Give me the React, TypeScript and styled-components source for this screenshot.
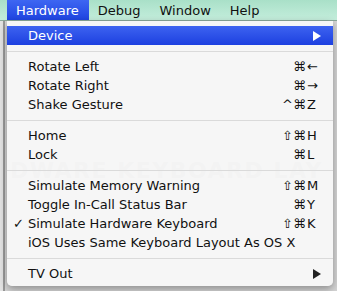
import React, { FC } from 'react';
import styled, { createGlobalStyle } from 'styled-components';

const GlobalStyle = createGlobalStyle`
  html, body {
    margin: 0;
    padding: 0;
    background: #dcdcdc;
  }
  body {
    font-family: "DejaVu Sans", "Liberation Sans", sans-serif;
    -webkit-font-smoothing: antialiased;
  }
`;

const Screen = styled.div`
  position: relative;
  width: 337px;
  height: 291px;
  overflow: hidden;
  background: #dadada;
  display: flex;
  flex-direction: column;
`;

const MenuBar = styled.div`
  height: 21px;
  flex: none;
  display: flex;
  align-items: stretch;
  padding-left: 7px;
  background: linear-gradient(#a9e0c8, #c4eedc);
  border-bottom: 1px solid #8aa89a;
  box-sizing: border-box;
`;

const BarItem = styled.div<{ $active?: boolean }>`
  display: flex;
  align-items: center;
  padding: 0 10px 0 9px;
  font-size: 13px;
  color: ${p => (p.$active ? '#fff' : '#111')};
  background: ${p => (p.$active ? 'linear-gradient(#3d66f2, #1f45e2)' : 'none')};
`;

const Desktop = styled.div`
  flex: 1;
  position: relative;
  background: linear-gradient(90deg, #e4e4e4 0, #e4e4e4 3px, #9a9a9a 3px, #9a9a9a 5px, #d6d6d6 5px);
`;

const GhostText = styled.div`
  position: absolute;
  left: 10px;
  top: 137px;
  font-size: 22px;
  font-weight: bold;
  letter-spacing: 1.5px;
  white-space: nowrap;
  color: #b2b2b2;
`;

const Menu = styled.div`
  position: absolute;
  top: 21px;
  left: 7px;
  width: 326px;
  padding: 5px 0 3px;
  background: rgba(249, 249, 249, 0.9);
  border-radius: 0 0 5px 5px;
  box-shadow: 0 3px 9px rgba(0, 0, 0, 0.35);
  font-size: 13px;
  color: #111;
`;

const Row = styled.div<{ $active?: boolean }>`
  position: relative;
  height: 19px;
  display: flex;
  align-items: center;
  padding: 0 12px 0 21px;
  color: ${p => (p.$active ? '#fff' : '#111')};
  background: ${p => (p.$active ? 'linear-gradient(#3d63f0, #1d40e0)' : 'none')};
`;

const Label = styled.span`
  flex: 1;
  white-space: nowrap;
`;

const Check = styled.span`
  position: absolute;
  left: 6px;
  top: 0;
  line-height: 19px;
  font-size: 13px;
`;

const Shortcut = styled.span`
  display: flex;
  white-space: nowrap;
`;

const Mods = styled.span`
  text-align: right;
`;

const Key = styled.span`
  width: 14px;
  padding-left: 1px;
`;

const Separator = styled.div`
  height: 12px;
  display: flex;
  align-items: center;
  &::after {
    content: '';
    flex: 1;
    height: 1px;
    background: #dadada;
  }
`;

const Arrow: FC<{ color: string }> = ({ color }) => (
  <svg width="8" height="10" viewBox="0 0 8 10">
    <path d="M0 0 L8 5 L0 10 Z" fill={color} />
  </svg>
);

type Item =
  | { sep: true }
  | { label: string; mods?: string; key?: string; sub?: boolean; checked?: boolean; active?: boolean };

const items: Item[] = [
  { label: 'Device', sub: true, active: true },
  { sep: true },
  { label: 'Rotate Left', mods: '⌘', key: '←' },
  { label: 'Rotate Right', mods: '⌘', key: '→' },
  { label: 'Shake Gesture', mods: '^⌘', key: 'Z' },
  { sep: true },
  { label: 'Home', mods: '⇧⌘', key: 'H' },
  { label: 'Lock', mods: '⌘', key: 'L' },
  { sep: true },
  { label: 'Simulate Memory Warning', mods: '⇧⌘', key: 'M' },
  { label: 'Toggle In-Call Status Bar', mods: '⌘', key: 'Y' },
  { label: 'Simulate Hardware Keyboard', mods: '⇧⌘', key: 'K', checked: true },
  { label: 'iOS Uses Same Keyboard Layout As OS X' },
  { sep: true },
  { label: 'TV Out', sub: true },
];

const App: FC = () => (
  <>
    <GlobalStyle />
    <Screen>
      <MenuBar>
        <BarItem $active>Hardware</BarItem>
        <BarItem>Debug</BarItem>
        <BarItem>Window</BarItem>
        <BarItem>Help</BarItem>
      </MenuBar>
      <Desktop>
        <GhostText>DWARE KEYBOARD LAY</GhostText>
      </Desktop>
      <Menu>
        {items.map((it, i) => {
          if ('sep' in it) return <Separator key={i} />;
          return (
            <Row key={i} $active={it.active}>
              {it.checked && <Check>✓</Check>}
              <Label>{it.label}</Label>
              {it.key && (
                <Shortcut>
                  <Mods>{it.mods}</Mods>
                  <Key>{it.key}</Key>
                </Shortcut>
              )}
              {it.sub && <Arrow color={it.active ? '#fff' : '#222'} />}
            </Row>
          );
        })}
      </Menu>
    </Screen>
  </>
);

export default App;
